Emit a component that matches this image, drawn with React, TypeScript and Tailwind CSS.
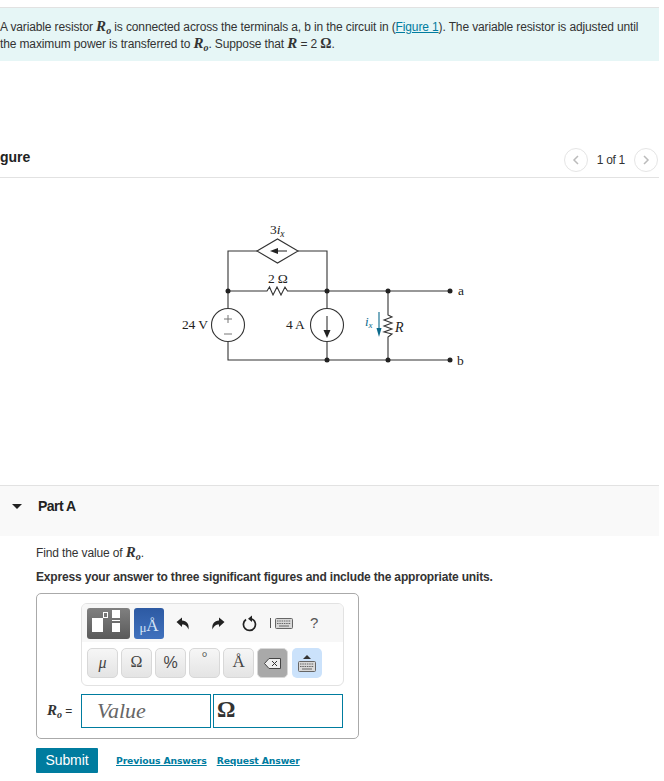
const sans = { fontFamily: '"Liberation Sans", Arial, sans-serif' };

function MathR({ sub }: { sub?: boolean }) {
  return (
    <span className="font-['Liberation_Serif'] font-bold italic text-[15px] leading-none text-[#333] tracking-normal">
      R{sub && <sub className="text-[10px] leading-none align-[-3px] bottom-0">o</sub>}
    </span>
  );
}

function Circuit() {
  const dots = [[58, 76], [157, 76], [218, 76], [157, 145], [218, 145], [280, 76], [280, 145]];
  return (
    <svg width="310" height="160" viewBox="0 0 310 160" className="block" fontFamily="Liberation Serif, serif" fill="#222">
      <g fill="none" stroke="#333" strokeWidth="1.1">
        <path d="M58 76V36H87M128 36H157V76M58 76V93M58 127V145H280M157 93V76H280M157 127V145" />
        <path d="M87 36L107.500 24L128 36L107.500 48Z" />
        <path d="M58 76H97L99.500 72L103 80L107 72L111 80L115 72L117.500 76H157" />
        <circle cx="58" cy="110" r="16.500" />
        <circle cx="157" cy="110" r="16.500" />
        <path d="M218 76V100L222 102L214 105L222 108L214 111L222 114L214 117L222 119L218 122V145" />
        <path d="M157 101V117" />
        <path d="M117 36H104" />
        <path d="M54 104H62M58 100V108" stroke="#777" strokeWidth="1" />
        <path d="M54 119H62" stroke="#777" strokeWidth="1" />
      </g>
      <path d="M100 36L108 33V39Z" />
      <path d="M157 123L153.500 115H160.500Z" />
      <path d="M209 97V116" stroke="#0a6a8c" strokeWidth="1.1" />
      <path d="M209 122L206.500 113H211.500Z" fill="#0a6a8c" />
      {dots.map(([x, y]) => (
        <circle key={`${x}-${y}`} cx={x} cy={y} r="2.500" />
      ))}
      <text x="100" y="19" fontSize="13.500">3<tspan fontStyle="italic">i</tspan><tspan fontStyle="italic" fontSize="9.500" dy="3">x</tspan></text>
      <text x="98" y="68" fontSize="13.500">2 Ω</text>
      <text x="12" y="114" fontSize="13.500">24 V</text>
      <text x="116" y="114" fontSize="13.500">4 A</text>
      <text x="195" y="111" fontSize="13" fontStyle="italic" fill="#0a6a8c">i<tspan fontSize="9" dy="2">x</tspan></text>
      <text x="225" y="117" fontSize="14" fontStyle="italic">R</text>
      <text x="288" y="80" fontSize="13.500">a</text>
      <text x="287" y="150" fontSize="13.500">b</text>
    </svg>
  );
}

function KeyboardIcon({ className }: { className?: string }) {
  return (
    <svg width="18" height="11" viewBox="0 0 18 11" className={className}>
      <rect x="0.500" y="0.500" width="17" height="10" rx="1" fill="#d8d8d8" stroke="#666" />
      <path d="M2 3H16M2 5.500H16" stroke="#666" strokeDasharray="1.500 .8" />
      <path d="M4 8H14" stroke="#666" />
    </svg>
  );
}

function ToolButton({ children, className }: { children?: React.ReactNode; className?: string }) {
  return (
    <div className={`w-[31px] h-[30px] rounded-[5px] border border-[#d8d8d8] flex items-center justify-center text-[#444] bg-gradient-to-b from-[#f6f6f6] to-[#e4e4e4] ${className ?? ''}`}>
      {children}
    </div>
  );
}

function Toolbar() {
  return (
    <div className="ml-[44px] w-[263px] h-[83px] border border-[#e2e2e2] rounded-[6px] overflow-hidden">
      <div className="h-[38px] bg-[#f7f7f7] flex items-center pl-[5px]">
        <div className="w-[43px] h-[31px] rounded-[3px] bg-gradient-to-b from-[#808080] to-[#5a5a5a] relative">
          <div className="absolute left-[5px] top-[10px] w-[11px] h-[14px] bg-white" />
          <div className="absolute left-[16px] top-[4px] w-[5px] h-[6px] border border-white" />
          <div className="absolute left-[25px] top-[2px] w-[8px] h-[8px] bg-white" />
          <div className="absolute left-[25px] top-[12px] w-[8px] h-[1px] bg-white" />
          <div className="absolute left-[25px] top-[15px] w-[8px] h-[9px] bg-white" />
        </div>
        <div className="ml-[4px] w-[30px] h-[31px] rounded-[3px] bg-gradient-to-b from-[#2d5aa3] to-[#4071bd] text-[#d5e4f7] flex items-end justify-center pb-[5px] font-['Liberation_Serif'] leading-none">
          <span className="text-[13px]">μ</span><span className="text-[17px]">Å</span>
        </div>
        <svg width="14" height="13" viewBox="0 0 14 13" className="ml-[12px]" fill="#222">
          <path d="M.5 5L6 .5V3.500C10.500 3.500 13.500 7 12.500 12.500C11 9 9.500 7.500 6 7.500V10Z" />
        </svg>
        <svg width="14" height="13" viewBox="0 0 14 13" className="ml-[21px]" fill="#222">
          <path d="M13.500 5L8 .5V3.500C3.500 3.500 .5 7 1.500 12.500C3 9 4.500 7.500 8 7.500V10Z" />
        </svg>
        <svg width="15" height="17" viewBox="0 0 15 17" className="ml-[17px]" fill="none" stroke="#222" strokeWidth="1.700">
          <path d="M4 4.500A6 6 0 1 0 10 4" />
          <path d="M9 .5V7L5 3.800Z" fill="#222" stroke="none" transform="translate(1 0)" />
        </svg>
        <div className="ml-[13px] w-[1px] h-[10px] bg-[#555]" />
        <KeyboardIcon className="ml-[4px]" />
        <span className="ml-[17px] text-[15px] text-[#555]" style={sans}>?</span>
      </div>
      <div className="flex gap-[3px] pl-[5px] pt-[6px]">
        <ToolButton><span className="font-['Liberation_Serif'] italic text-[16px]">μ</span></ToolButton>
        <ToolButton><span className="font-['Liberation_Serif'] text-[16px] -mt-[3px]">Ω</span></ToolButton>
        <ToolButton><span className="text-[16px]" style={sans}>%</span></ToolButton>
        <ToolButton><span className="font-['Liberation_Serif'] text-[14px] -mt-[12px]">°</span></ToolButton>
        <ToolButton><span className="font-['Liberation_Serif'] text-[17px] -mt-[3px]">Å</span></ToolButton>
        <ToolButton className="bg-none bg-[#a9a9a9] border-[#a0a0a0]">
          <svg width="17" height="11" viewBox="0 0 17 11">
            <path d="M5 .5H16.500V10.500H5L.5 5.500Z" fill="#eee" stroke="#444" />
            <path d="M8 3L13 8M13 3L8 8" stroke="#333" />
          </svg>
        </ToolButton>
        <div className="ml-[1px] w-[30px] h-[30px] rounded-[5px] bg-[#cbe2fb] flex flex-col items-center justify-center gap-[2px]">
          <div className="w-0 h-0 border-x-[4px] border-x-transparent border-b-[4px] border-b-[#333]" />
          <KeyboardIcon />
        </div>
      </div>
    </div>
  );
}

export default function App() {
  return (
    <div className="w-[664px] h-[781px] overflow-hidden bg-white">
      <div className="w-[659px] text-[#333] text-[12px] tracking-[-0.13px]" style={sans}>
        {/* Intro */}
        <div className="pt-[7px]">
          <div className="border-t border-[#e2e2e2] bg-[#e6f6f6] h-[54px] pt-[11px] leading-[15px]">
            <p className="whitespace-nowrap">
              A variable resistor <MathR sub /> is connected across the terminals a, b in the circuit in (
              <span className="text-[#007c9f] underline">Figure 1</span>). The variable resistor is adjusted until
            </p>
            <p>
              the maximum power is transferred to <MathR sub />. Suppose that <MathR /> = 2{' '}
              <span className="font-['Liberation_Serif'] font-bold text-[14px] leading-none">Ω</span>.
            </p>
          </div>
        </div>

        {/* Figure header */}
        <div className="mt-[84px] h-[33px] border-b border-[#e2e2e2] flex items-start pr-[1px]">
          <h2 className="text-[14px] font-bold text-[#222] leading-[24px] tracking-normal">gure</h2>
          <div className="ml-auto flex items-center mt-[3px]">
            <div className="w-[24px] h-[24px] rounded-full border border-[#e5e5e5] flex items-center justify-center text-[#bbb]">
              <svg width="8" height="12" viewBox="0 0 8 12" fill="none" stroke="currentColor" strokeWidth="1.500"><path d="M6 2L2 6L6 10" /></svg>
            </div>
            <span className="mx-[9px] text-[#333] tracking-[-0.3px]">1 of 1</span>
            <div className="w-[24px] h-[24px] rounded-full border border-[#e5e5e5] flex items-center justify-center text-[#bbb]">
              <svg width="8" height="12" viewBox="0 0 8 12" fill="none" stroke="currentColor" strokeWidth="1.500"><path d="M2 2L6 6L2 10" /></svg>
            </div>
          </div>
        </div>

        {/* Circuit */}
        <div className="h-[307px] pt-[37px] pl-[170px]">
          <Circuit />
        </div>

        {/* Part A */}
        <div className="h-[51px] border-t border-[#e2e2e2] bg-[#f9f9f9] flex items-center pb-[9px]">
          <div className="ml-[12px] w-0 h-0 border-x-[5px] border-x-transparent border-t-[5px] border-t-[#222]" />
          <span className="ml-[16px] text-[14px] font-bold text-[#222] tracking-[-0.5px]">Part A</span>
        </div>

        <div className="pl-[36px]">
          <p className="mt-[9px] leading-[15px]">Find the value of <MathR sub />.</p>
          <p className="mt-[8px] leading-[15px] font-bold tracking-[-0.17px]">Express your answer to three significant figures and include the appropriate units.</p>

          {/* Answer box */}
          <div className="mt-[8px] w-[323px] h-[146px] border border-[#aaa] rounded-[5px] pt-[9px]">
            <Toolbar />
            <div className="mt-[8px] flex items-center">
              <span className="ml-[10px] w-[34px] whitespace-nowrap text-[12px]"><MathR sub /> =</span>
              <div className="w-[130px] h-[34px] border border-[#007c9f] pl-[15px] font-['Liberation_Serif'] italic text-[22px] leading-[32px] text-[#666] tracking-normal">
                Value
              </div>
              <div className="ml-[2px] w-[130px] h-[34px] border border-[#007c9f] pl-[3px] font-['Liberation_Serif'] font-bold text-[23px] leading-[30px] text-[#333]">
                Ω
              </div>
            </div>
          </div>

          <div className="mt-[9px] flex items-center">
            <div className="w-[62px] h-[25px] rounded-[1px] bg-[#007c9f] text-white text-[14px] flex items-center justify-center">Submit</div>
            <span className="ml-[18px] font-['DejaVu_Sans'] font-bold text-[9.300px] tracking-[-0.15px] text-[#007c9f] underline">Previous Answers</span>
            <span className="ml-[10px] font-['DejaVu_Sans'] font-bold text-[9.300px] tracking-[-0.15px] text-[#007c9f] underline">Request Answer</span>
          </div>
        </div>
      </div>
    </div>
  );
}
